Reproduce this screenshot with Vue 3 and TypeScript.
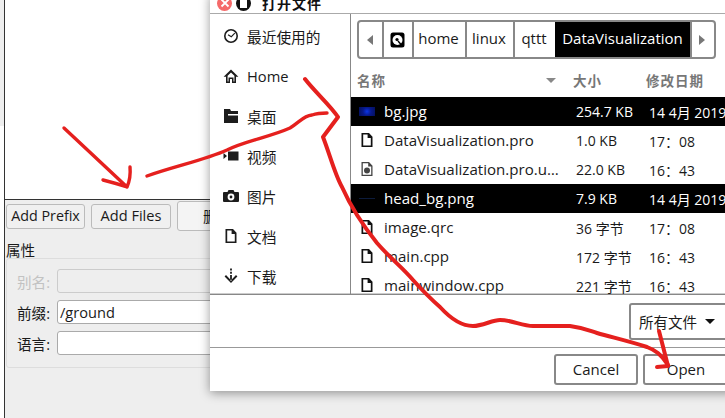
<script setup lang="ts">
const icons: Record<string, string> = {
  clock: 'M8 1a7 7 0 1 0 0 14A7 7 0 0 0 8 1zm0 1.6a5.4 5.4 0 1 1 0 10.8A5.4 5.4 0 0 1 8 2.6zM11.4 4.8L8.2 8 5.4 6.3 4.7 7.3 8.4 9.6 12.2 5.6z',
  home: 'M8 1.5L.6 8.8h2.4V15h4v-4h2v4h4V8.8h2.4zM8 4.4L11.4 7.8V13.5H10.5v-4h-5v4H4.6V7.8z',
  folder: 'M1 1h6l1 2h7v12H1zM5 6v1.5H15V6z',
  video: 'M0.5 5L4 8 0.5 11zM5 3.5h10.5v9H5z',
  camera: 'M5.5 2h5l1 2H15a1 1 0 0 1 1 1v8a1 1 0 0 1-1 1H1a1 1 0 0 1-1-1V5a1 1 0 0 1 1-1h3.5zM8 5.6a3.4 3.4 0 1 0 0 6.8 3.4 3.4 0 0 0 0-6.8zM8 7.6a1.4 1.4 0 1 1 0 2.8 1.4 1.4 0 0 1 0-2.8z',
  file: 'M2.5 1h7.5l3.5 3.8V15h-11zM4.2 2.6v10.8h7.6V6H8.6V2.6z',
  source: 'M2.5 1h7.5l3.5 3.8V15h-11zM3.8 2.3v11.4h8.4V5.4H9.2V2.3zM8 6.5a3 3 0 1 0 0 6 3 3 0 0 0 0-6z',
  download: 'M7.1 0.5h1.8v2H7.1zM7.1 3.8h1.8v2H7.1zM7.1 7h1.8v5L8 13l-.9-1zM1.6 8.4L3 7l5 5.2L13 7l1.4 1.4L8 15z'
}

const places = [
  { icon: 'clock', label: '最近使用的' },
  { icon: 'home', label: 'Home' },
  { icon: 'folder', label: '桌面' },
  { icon: 'video', label: '视频' },
  { icon: 'camera', label: '图片' },
  { icon: 'file', label: '文档' },
  { icon: 'download', label: '下载' }
]

const crumbs = ['home', 'linux', 'qttt']

const files = [
  { name: 'bg.jpg', size: '254.7 KB', date: '14 4月 2019', selected: true, kind: 'photo' },
  { name: 'DataVisualization.pro', size: '1.0 KB', date: '17：08', selected: false, kind: 'file' },
  { name: 'DataVisualization.pro.u…', size: '22.0 KB', date: '16：43', selected: false, kind: 'source' },
  { name: 'head_bg.png', size: '7.9 KB', date: '14 4月 2019', selected: true, kind: 'strip' },
  { name: 'image.qrc', size: '36 字节', date: '17：08', selected: false, kind: 'file' },
  { name: 'main.cpp', size: '172 字节', date: '16：43', selected: false, kind: 'file' },
  { name: 'mainwindow.cpp', size: '221 字节', date: '16：43', selected: false, kind: 'file' }
]

const fields = [
  { label: '别名:', value: '', disabled: true },
  { label: '前缀:', value: '/ground', disabled: false },
  { label: '语言:', value: '', disabled: false }
]
</script>

<template>
  <div class="screen">
    <div class="gutter"><div class="gutter-top"></div></div>
    <div class="editor">
      <div class="canvas"></div>
      <div class="panel">
        <div class="actions">
          <button class="btn first-btn">Add Prefix</button>
          <button class="btn">Add Files</button>
          <button class="btn tall">删除</button>
        </div>
        <div class="group-title">属性</div>
        <div class="group">
          <div v-for="f in fields" :key="f.label" class="field" :class="{ off: f.disabled }">
            <span class="field-label">{{ f.label }}</span>
            <div class="field-input">{{ f.value }}</div>
          </div>
        </div>
      </div>
    </div>

    <section class="dialog">
      <header class="titlebar">
        <span class="win close">
          <svg width="10" height="10" viewBox="0 0 10 10"><path d="M1.5 1.5l7 7M8.5 1.5l-7 7" stroke="#fff" stroke-width="1.8" /></svg>
        </span>
        <span class="win restore"><i></i></span>
        <span class="title">打开文件</span>
      </header>
      <div class="browser">
        <nav class="places">
          <div v-for="p in places" :key="p.label" class="place">
            <svg class="icon" viewBox="0 0 16 16"><path :d="icons[p.icon]" fill-rule="evenodd" /></svg>
            <span>{{ p.label }}</span>
          </div>
        </nav>
        <div class="content">
          <div class="pathbar">
            <div class="seg arrow first"><i class="tri left"></i></div>
            <div class="seg drive">
              <svg width="15" height="16" viewBox="0 0 15 16">
                <rect x="0.5" y="0.5" width="14" height="15" rx="2.5" fill="#000" />
                <circle cx="7.5" cy="8" r="5" fill="#fff" />
                <circle cx="7" cy="7.5" r="1.6" fill="#000" />
                <path d="M8 9l3 3.5" stroke="#000" stroke-width="1.4" />
              </svg>
            </div>
            <div v-for="c in crumbs" :key="c" class="seg label" :class="'crumb-' + c">{{ c }}</div>
            <div class="seg label current">DataVisualization</div>
            <div class="seg arrow"><i class="tri right"></i></div>
          </div>
          <div class="head">
            <span class="head-name">名称<i class="sort"></i></span>
            <span>大小</span>
            <span>修改日期</span>
          </div>
          <div class="list">
            <div v-for="f in files" :key="f.name" class="row" :class="{ selected: f.selected }">
              <span class="name">
                <span class="thumb">
                  <i v-if="f.kind === 'photo'" class="photo"></i>
                  <i v-else-if="f.kind === 'strip'" class="strip"></i>
                  <svg v-else class="file-icon" :class="f.kind" viewBox="0 0 16 16"><path :d="icons[f.kind]" fill-rule="evenodd" /></svg>
                </span>
                <span>{{ f.name }}</span>
              </span>
              <span>{{ f.size }}</span>
              <span>{{ f.date }}</span>
            </div>
          </div>
        </div>
      </div>
      <div class="filter-row">
        <div class="filter"><span>所有文件</span><i class="tri down"></i></div>
      </div>
      <footer class="buttons">
        <div class="dlg-btn cancel">Cancel</div>
        <div class="dlg-btn open">Open</div>
      </footer>
    </section>

    <svg class="ink" width="725" height="418" viewBox="0 0 725 418">
      <path class="thin" d="M64 128L127 187M103 180Q115 183 127 187Q131 178 130 167" />
      <path class="thin" d="M147 176C175 166 205 160 227 150C245 141 270 137 290 128C300 122 303 116 312 115C318 113 322 113 327 113" />
      <path d="M305 79C315 92 330 105 338 117L323 137C330 155 335 175 342 187C350 205 365 228 377 243C390 258 403 268 413 280C422 290 432 300 440 307C450 318 462 326 473 326C483 326 492 320 500 320C512 320 522 326 533 326L570 326C585 328 590 331 597 333C615 338 632 342 647 347C655 350 661 354 668 365" />
      <path d="M659 331L668 366L657 367" />
    </svg>
  </div>
</template>

<style scoped>
.screen {
  position: relative;
  display: flex;
  width: 725px;
  height: 418px;
  overflow: hidden;
  background: #fff;
  color: #1a1a1a;
  font-family: "Open Sans", "Noto Sans CJK SC", sans-serif;
  font-size: 14.6px;
}
.gutter { width: 4px; flex: none; }
.gutter-top { height: 126px; background: #eee; }
.editor {
  flex: 1;
  display: flex;
  flex-direction: column;
  border-left: 1px solid #333;
}
.canvas { height: 199px; flex: none; border-bottom: 1px solid #333; }
.panel { flex: 1; background: #eee; padding: 1px 0 0 1px; }
.actions { display: flex; align-items: center; gap: 6px; height: 30px; }
.btn {
  width: 80px;
  height: 25px;
  padding: 0 0 2px;
  border: 1px solid #bbb;
  border-radius: 3px;
  background: #f0f0f0;
  color: inherit;
  font: inherit;
  white-space: nowrap;
}
.first-btn { width: 79px; font-size: 14.3px; }
.tall {
  width: 100px;
  height: 30px;
  padding-left: 25px;
  text-align: left;
  background: #f4f4f4;
}
.group-title { margin-top: 10px; line-height: 18px; }
.group {
  width: 300px;
  height: 110px;
  box-sizing: border-box;
  margin-top: -1px;
  padding: 10px 10px 0;
  display: flex;
  flex-direction: column;
  gap: 7px;
  border: 1px solid #ddd;
  border-radius: 3px;
}
.field { display: flex; align-items: center; gap: 6px; }
.field-label { width: 34px; flex: none; white-space: nowrap; }
.field-input {
  flex: 1;
  height: 24px;
  box-sizing: border-box;
  padding: 0 2px;
  line-height: 23px;
  background: #fff;
  border: 1px solid #aaa;
  border-radius: 3px;
}
.off .field-label { color: #c2c2c2; }
.off .field-input { background: #eee; border-color: #ccc; }

.dialog {
  position: absolute;
  left: 210px;
  top: -7px;
  width: 525px;
  height: 398px;
  display: flex;
  flex-direction: column;
  background: #fff;
  box-shadow: 0 2px 10px rgba(0, 0, 0, 0.4);
  font-size: 15px;
}
.titlebar {
  height: 20px;
  flex: none;
  display: flex;
  align-items: center;
  border-bottom: 1px solid #aaa;
  padding-left: 7px;
}
.win {
  width: 15px;
  height: 15px;
  border-radius: 50%;
  display: flex;
  align-items: center;
  justify-content: center;
}
.close { background: #f56a6a; }
.restore { background: #111; margin-left: 4px; }
.restore i { width: 7px; height: 9px; background: #fff; }
.title { margin-left: 11px; font-size: 14px; font-weight: 700; letter-spacing: 1px; color: #111; }

.browser {
  height: 280px;
  flex: none;
  display: flex;
  border-bottom: 1px solid #888;
  box-shadow: inset 0 -1px 0 #ccc;
}
.places {
  width: 141px;
  flex: none;
  box-sizing: border-box;
  padding: 2px 0 0 13px;
  border-right: 1px solid #888;
  overflow: hidden;
  font-size: 14.7px;
}
.place { display: flex; align-items: center; gap: 8px; height: 40px; }
.icon { width: 16px; height: 16px; flex: none; fill: #1c1c1c; }

.content { flex: 1; min-width: 0; display: flex; flex-direction: column; overflow: hidden; }
.pathbar {
  display: flex;
  width: 359px;
  height: 39px;
  flex: none;
  box-sizing: border-box;
  margin: 6px 0 0 6px;
  border: 2px solid #888;
  border-radius: 4px;
}
.seg {
  display: flex;
  flex: none;
  align-items: center;
  justify-content: center;
  padding-right: 2px;
  border-left: 2px solid #888;
  box-sizing: border-box;
}
.label { padding-bottom: 3px; }
.arrow { width: 24px; }
.first { border-left: 0; width: 23px; }
.drive { width: 30px; }
.crumb-home { width: 53px; }
.crumb-linux { width: 48px; }
.crumb-qttt { width: 42px; }
.current { width: 135px; padding-right: 0; border-left: 0; background: #000; color: #fff; }
.tri { width: 0; height: 0; border-style: solid; border-color: transparent; }
.left { border-width: 5px 6px 5px 0; border-right-color: #777; }
.right { border-width: 5px 0 5px 6px; border-left-color: #777; }
.down { border-width: 5px 5px 0; border-top-color: #111; }

.head {
  height: 38px;
  flex: none;
  box-sizing: border-box;
  padding: 4px 0 0 6px;
  display: grid;
  grid-template-columns: 216px 73px 1fr;
  align-items: center;
  font-weight: 700;
  font-size: 13.5px;
  letter-spacing: 1px;
  color: #777;
}
.head-name { display: flex; align-items: center; justify-content: space-between; padding-right: 17px; }
.sort { width: 0; height: 0; border-style: solid; border-width: 5px 5px 0; border-color: #888 transparent transparent; }
.list { flex: 1; overflow: hidden; }
.row {
  height: 29px;
  display: grid;
  grid-template-columns: 225px 73px 1fr;
  align-items: center;
  white-space: nowrap;
  font-size: 14px;
}
.selected { background: #000; color: #fff; }
.name { display: flex; align-items: center; gap: 9px; padding: 0 0 1px 8px; font-size: 15.1px; }
.thumb { width: 16px; height: 16px; display: flex; align-items: center; justify-content: center; flex: none; }
.photo { width: 16px; height: 9px; background: radial-gradient(circle, #0a35e6 0%, #07188a 45%, #04105a 100%); }
.strip { width: 16px; height: 1px; background: #0c1b3c; }
.file-icon { width: 16px; height: 16px; fill: #111; }
.file-icon.source { fill: #444; }

.filter-row {
  height: 52px;
  flex: none;
  display: flex;
  align-items: center;
  justify-content: flex-end;
  padding-right: 6px;
  border-bottom: 1px solid #999;
  font-size: 14.5px;
}
.filter {
  width: 100px;
  height: 37px;
  box-sizing: border-box;
  display: flex;
  align-items: center;
  justify-content: space-between;
  padding: 0 12px 0 8px;
  border: 2px solid #888;
  border-radius: 3px;
}
.buttons {
  flex: 1;
  display: flex;
  justify-content: flex-end;
  gap: 5px;
  padding: 6px 6px 0 0;
}
.dlg-btn {
  height: 31px;
  box-sizing: border-box;
  display: flex;
  align-items: center;
  justify-content: center;
  padding-bottom: 2px;
  border: 2px solid #888;
  border-radius: 3px;
}
.cancel { width: 84px; }
.open { width: 86px; }

.ink {
  position: absolute;
  left: 0;
  top: 0;
  pointer-events: none;
}
.ink path {
  fill: none;
  stroke: #e5201e;
  stroke-width: 4;
  stroke-linecap: round;
  stroke-linejoin: round;
}
.ink .thin { stroke-width: 3.4; }
</style>
